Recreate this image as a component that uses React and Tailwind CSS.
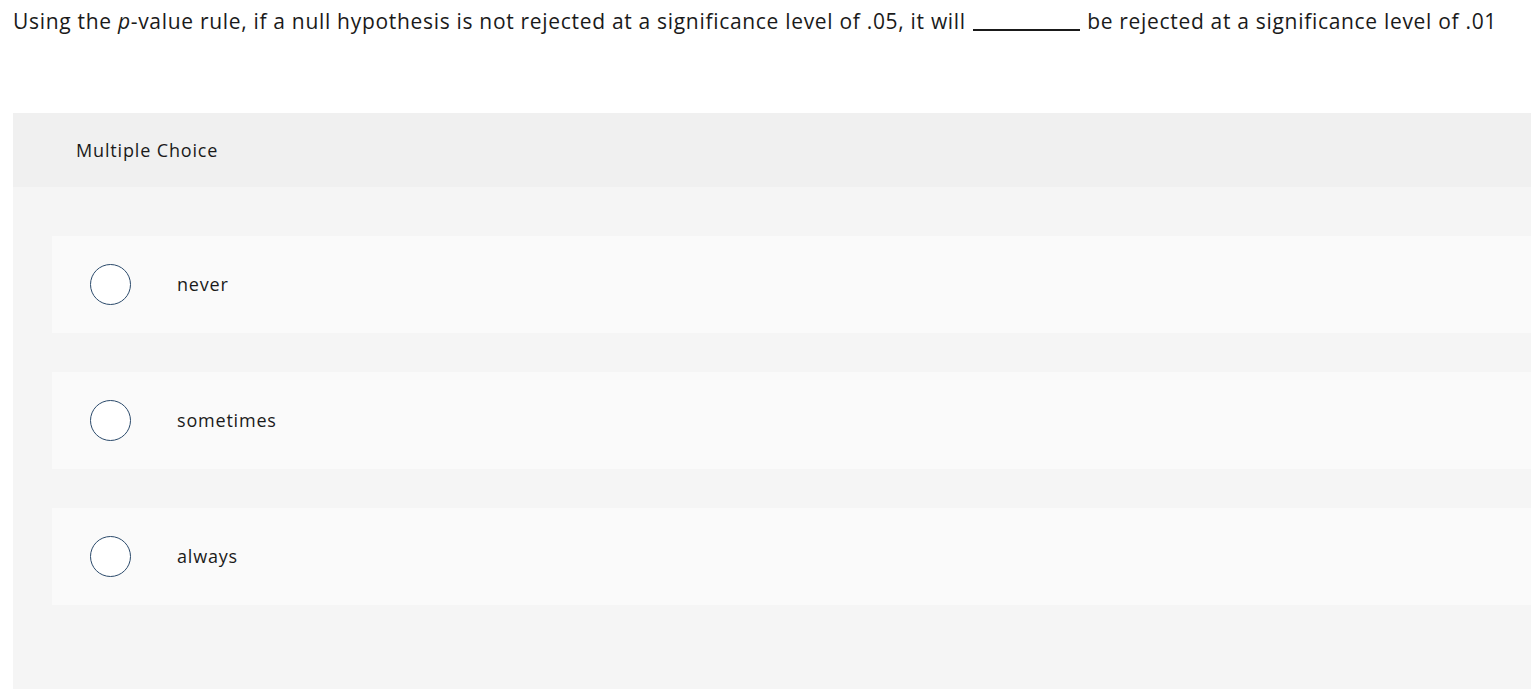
import React from "react";

const options = ["never", "sometimes", "always"];

const App = () => {
  return (
    <div
      className="w-[1531px] h-[695px] bg-white overflow-hidden text-[#1a1a1a]"
      style={{ fontFamily: "'Open Sans', Lato, sans-serif" }}>
      <p className="pl-[13px] pt-[7px] text-[21px] leading-[28px] whitespace-nowrap tracking-[0.69px]">
        Using the <i>p</i>-value rule, if a null hypothesis is not rejected at a
        significance level of .05, it will{" "}
        <span className="inline-block w-[107px] border-b-2 border-[#1a1a1a] align-baseline mx-[1px] translate-y-[2px]"></span>{" "}
        be rejected at a significance level of .01
      </p>

      <div className="ml-[13px] mt-[78px] h-[576px] bg-[#f5f5f5]">
        <div className="h-[74px] bg-[#f0f0f0] flex items-center pl-[63px] text-[18px] tracking-[0.85px]">
          Multiple Choice
        </div>
        <div className="flex flex-col gap-[39px] pt-[49px] pl-[39px]">
          {options.map((opt) => (
            <div
              key={opt}
              className="h-[97px] bg-[#fafafa] flex items-center pl-[38px]">
              <div className="w-[41px] h-[41px] rounded-full border border-[#2b4a6b] bg-white shrink-0" />
              <span className="ml-[46px] text-[18px] tracking-[0.8px]">{opt}</span>
            </div>
          ))}
        </div>
      </div>
    </div>
  );
};

export default App;
